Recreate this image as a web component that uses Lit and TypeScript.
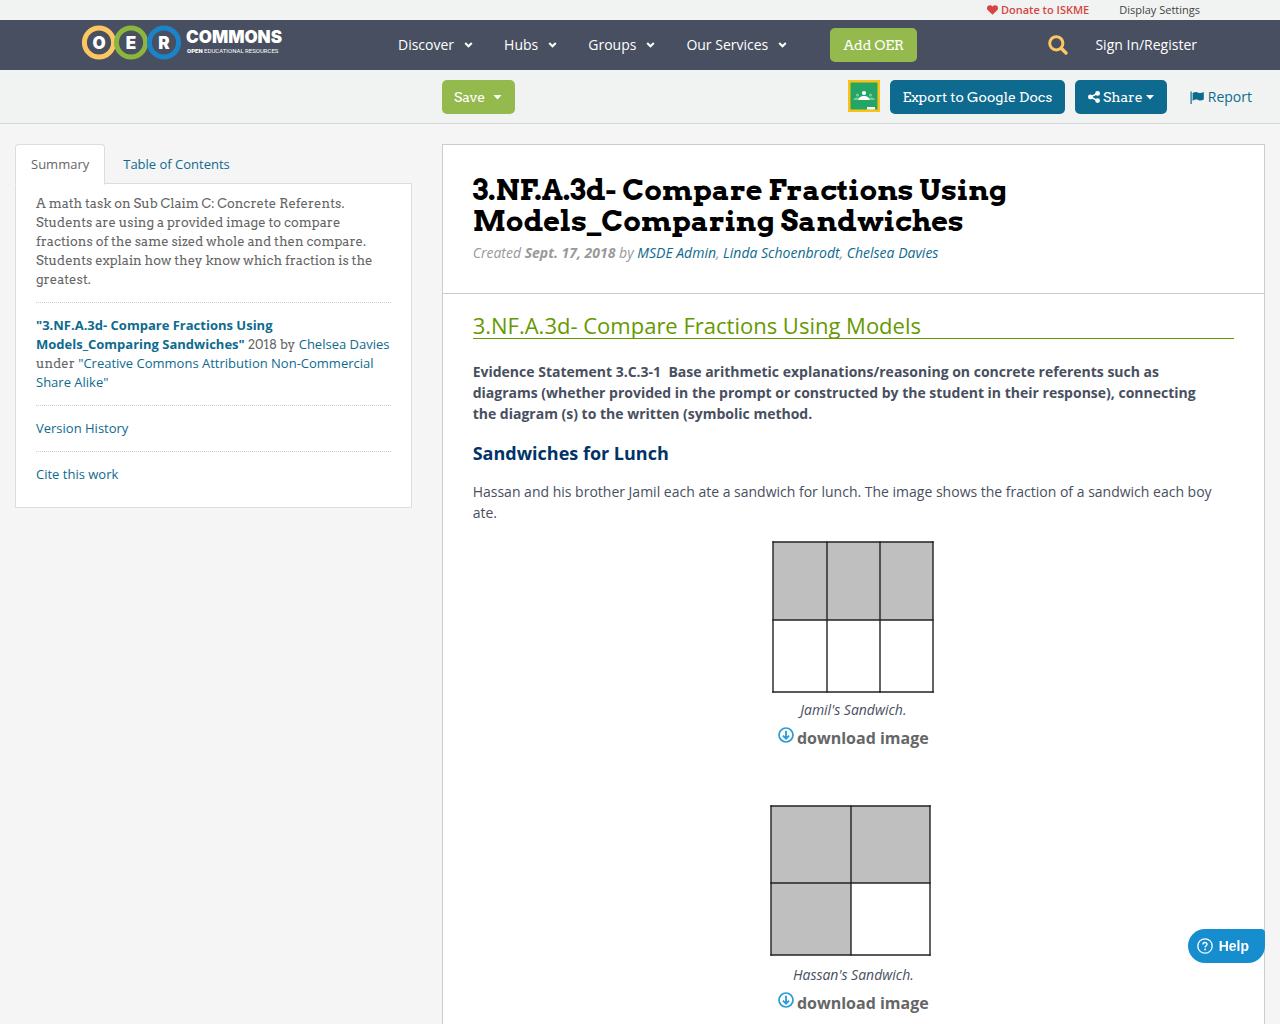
import { LitElement, html, css, svg } from "lit";
import { customElement, property } from "lit/decorators.js";

const NAV = ["Discover", "Hubs", "Groups", "Our Services"];

interface Sandwich {
  name: string;
  height: number;
  xs: number[];
  ys: number[];
  shaded: number;
}

const SANDWICHES: Sandwich[] = [
  { name: "Jamil's Sandwich.", height: 155, xs: [5, 59, 112, 165], ys: [2, 80, 152], shaded: 3 },
  { name: "Hassan's Sandwich.", height: 156, xs: [3, 83, 162], ys: [2, 79, 151], shaded: 3 },
];

@customElement("fraction-figure")
export class FractionFigure extends LitElement {
  @property({ attribute: false }) item: Sandwich = SANDWICHES[0];

  static styles = css`
    :host { display: block; }
    .figure { margin: 0; text-align: center; }
    .drawing { display: block; margin: 0 auto; }
    .caption { font-style: italic; line-height: 21px; margin-top: 4px; color: #484f60; }
    .download {
      display: inline-flex; align-items: flex-start; gap: 3px; margin-top: 6px;
      font-size: 16px; line-height: 24px; font-weight: 700; color: #666; text-decoration: none;
    }
  `;

  render() {
    const { xs, ys, shaded, height, name } = this.item;
    const cols = xs.length - 1;
    const cells = [];
    for (let i = 0; i < shaded; i++) {
      const c = i % cols;
      const r = Math.floor(i / cols);
      cells.push(svg`<rect x=${xs[c]} y=${ys[r]} width=${xs[c + 1] - xs[c]} height=${ys[r + 1] - ys[r]} fill="#bfbfbf"/>`);
    }
    const right = xs[cols];
    const bottom = ys[ys.length - 1];
    return html`
      <figure class="figure">
        <svg class="drawing" width="170" height=${height} viewBox="0 0 170 ${height}" role="img" aria-label=${name}>
          ${cells}
          <g stroke="#222" stroke-width="1.4" stroke-linecap="square">
            ${xs.map((x) => svg`<line x1=${x} x2=${x} y1=${ys[0]} y2=${bottom}/>`)}
            ${ys.map((y) => svg`<line x1=${xs[0]} x2=${right} y1=${y} y2=${y}/>`)}
          </g>
        </svg>
        <figcaption class="caption">${name}</figcaption>
        <a class="download" href="#">
          <svg width="16" height="18" viewBox="0 0 16 18" fill="none" stroke="#2a9bd4" aria-hidden="true">
            <circle cx="8" cy="9" r="7" stroke-width="1.7"/>
            <path d="M8 4.8V12.6M4.9 9.6L8 12.7L11.1 9.6" stroke-width="1.8"/>
          </svg>
          download image
        </a>
      </figure>
    `;
  }
}

@customElement("app-root")
export class AppRoot extends LitElement {
  static styles = css`
    :host {
      display: flex; flex-direction: column; min-height: 100vh; background: #f5f5f5;
      font-family: "Open Sans", sans-serif; font-size: 14px; line-height: 21px; color: #484f60;
    }
    * { box-sizing: border-box; }
    a { color: #0e6a8e; text-decoration: none; }
    button { font: inherit; border: 0; cursor: pointer; }
    .slab { font-family: Arvo, "DejaVu Serif Condensed", "DejaVu Serif", serif; }

    .top {
      display: flex; justify-content: flex-end; gap: 30px; height: 20px; padding: 0 80px;
      background: #f0f3f2; font-size: 11px; line-height: 20px;
    }
    .top .donate { display: flex; align-items: center; gap: 3px; color: #d64541; font-weight: 600; }
    .top .settings { color: #444; padding: 0; background: none; line-height: 20px; }

    .navbar {
      display: flex; align-items: center; height: 50px; padding: 0 83px 0 80px;
      background: #484f60; line-height: 20px;
    }
    .logo { display: block; height: 40px; margin-right: 110px; }
    .menu { display: flex; gap: 31px; }
    .menu-item { display: flex; align-items: center; gap: 10px; padding: 0; background: none; color: #fff; }
    .btn {
      display: flex; align-items: center; justify-content: center; height: 34px; padding: 0;
      border-radius: 5px; color: #fff; font-size: 14px; line-height: 20px;
      font-family: Arvo, "DejaVu Serif Condensed", "DejaVu Serif", serif;
    }
    .green { background: #94ba4d; }
    .blue { background: #0e6a8e; }
    .add { margin-left: 43px; width: 87px; }
    .account { display: flex; align-items: center; gap: 27px; margin-left: auto; }
    .search { display: flex; padding: 0; background: none; }
    .account .sign { color: #fff; }

    .toolbar { display: flex; height: 54px; background: #f0f3f2; border-bottom: 1px solid #d3d6d5; padding-top: 10px; }
    .side { flex: 0 0 33.333%; padding: 0 15px; }
    .main { flex: 1 1 0; min-width: 0; padding: 0 15px; }
    .tools { display: flex; align-items: flex-start; gap: 10px; }
    .save { gap: 8px; width: 73px; }
    .classroom { display: block; margin-left: auto; height: 32px; }
    .export { width: 175px; }
    .share { width: 92px; gap: 3px; }
    .report { display: flex; align-items: center; gap: 4px; height: 34px; padding: 0 13px; line-height: 20px; }

    .columns { display: flex; flex: 1; padding-top: 20px; }
    .tabs { display: flex; height: 39px; font-size: 13px; line-height: 19px; }
    .tab { padding: 10px 15px; border: 1px solid transparent; background: none; color: #0e6a8e; height: 40px; }
    .tab.on {
      position: relative; background: #fff; color: #666; border-color: #ddd; border-bottom-color: #fff;
      border-radius: 4px 4px 0 0; margin-right: 2px; height: 41px;
    }
    .panel {
      background: #fff; border: 1px solid #ddd; padding: 10px 20px 23px;
      font-size: 13px; line-height: 19px; color: #666;
    }
    .block { margin: 0; padding-bottom: 13px; border-bottom: 1px dotted #ccc; }
    .block + .block { padding-top: 13px; }
    .block:last-child { border-bottom: 0; padding-bottom: 0; }

    .card { height: 100%; background: #fff; border: 1px solid #ccc; border-bottom: 0; }
    .head { padding: 29px 30px 30px; border-bottom: 1px solid #ccc; }
    .title { margin: 0; font-size: 29px; line-height: 31px; font-weight: 700; color: #000; }
    .byline { margin: 6px 0 0; font-style: italic; color: #999; }
    .body { padding: 20px 30px; }
    .section {
      margin: 0 0 22px; padding-bottom: 2px; font-size: 22px; line-height: 22px; font-weight: 400; color: #690;
      border-bottom: 1px solid #690;
    }
    .evidence { margin: 0 0 16px; padding-right: 16px; font-weight: 700; }
    .sub { margin: 0 0 15px; font-size: 18px; line-height: 26px; font-weight: 700; color: #036; }
    .text { margin: 0 0 17px; padding-right: 16px; }
    .pair { display: flex; flex-direction: column; gap: 54px; }

    .help {
      position: fixed; right: 15px; bottom: 61px; display: flex; align-items: center; gap: 6px;
      height: 34px; padding: 0 16px 0 9px; border-radius: 17px 4px 17px 17px; background: #168dce;
      color: #fff; font: 700 14px/34px "Liberation Sans", Arial, sans-serif;
    }
    .logo-heavy { font-family: Inter, sans-serif; font-weight: 900; fill: #fff; }
    .logo-small { font-family: Roboto, sans-serif; fill: #fff; }
  `;

  private caret(size: number) {
    return html`<svg width=${size} height="5" viewBox="0 0 8 5" aria-hidden="true"><path d="M0 0H8L4 4.6Z" fill="#fff"/></svg>`;
  }

  private logo() {
    const rings: [string, number, string][] = [
      ["O", 19, "#fcc763"],
      ["E", 51, "#8ab53f"],
      ["R", 84, "#1c83c8"],
    ];
    return html`
      <a class="logo" href="#" aria-label="OER Commons">
        <svg width="208" height="40" viewBox="0 0 208 40">
          ${rings.map(([t, x, c]) => svg`
            <circle cx=${x} cy="17.500" r="14.600" fill="none" stroke=${c} stroke-width="5"/>
            <text class="logo-heavy" x=${x} y="24" font-size="17" text-anchor="middle">${t}</text>`)}
          <text class="logo-heavy" x="106" y="18" font-size="17">COMMONS</text>
          <text class="logo-small" x="107" y="28" font-size="6"><tspan font-weight="900">OPEN</tspan> EDUCATIONAL RESOURCES</text>
        </svg>
      </a>
    `;
  }

  render() {
    return html`
      <div class="top">
        <a class="donate" href="#">
          <svg width="11" height="10" viewBox="0 0 11 10" aria-hidden="true"><path fill="#d64541" d="M5.5 9.8L.9 5.3C-.4 4 -.2 2 .8 1C2 -.2 4.300 -.1 5.500 1.500C6.700 -.1 9 -.2 10.200 1C11.200 2 11.400 4 10.100 5.300Z"/></svg>
          Donate to ISKME
        </a>
        <button class="settings">Display Settings</button>
      </div>

      <header class="navbar">
        ${this.logo()}
        <nav class="menu">
          ${NAV.map((n) => html`
            <button class="menu-item">${n}
              <svg width="9" height="6" viewBox="0 0 9 6" aria-hidden="true"><path d="M1.200 1L4.500 4.300L7.800 1" fill="none" stroke="#fff" stroke-width="2"/></svg>
            </button>`)}
        </nav>
        <a class="btn green add" href="#">Add OER</a>
        <div class="account">
          <button class="search" aria-label="Search">
            <svg width="20" height="20" viewBox="0 0 20 20" fill="none" stroke="#fcc763" aria-hidden="true">
              <circle cx="8.300" cy="8.300" r="6.600" stroke-width="3"/>
              <path d="M13.200 13.200L18 18" stroke-width="3.400" stroke-linecap="round"/>
            </svg>
          </button>
          <a class="sign" href="#">Sign In/Register</a>
        </div>
      </header>

      <div class="toolbar">
        <div class="side"></div>
        <div class="main tools">
          <button class="btn green save">Save ${this.caret(9)}</button>
          <a class="classroom" href="#" aria-label="Share to Google Classroom">
            <svg width="32" height="32" viewBox="0 0 32 32" aria-hidden="true">
              <rect width="32" height="32" fill="#fbc116"/>
              <rect x="2.500" y="2.500" width="27" height="27" fill="#23a566"/>
              <g fill="#7cc9a1">
                <circle cx="9.500" cy="15" r="1.500"/><circle cx="22.500" cy="15" r="1.500"/>
                <path d="M5.500 20C5.500 16.800 13 16.800 13 20ZM19 20C19 16.800 26.800 16.800 26.800 20Z"/>
              </g>
              <g fill="#fff">
                <circle cx="16" cy="13" r="2.100"/>
                <path d="M10.500 20C10.500 14.800 21.500 14.800 21.500 20Z"/>
                <rect x="19" y="27" width="8" height="2.500"/>
              </g>
            </svg>
          </a>
          <button class="btn blue export">Export to Google Docs</button>
          <button class="btn blue share">
            <svg width="12" height="12" viewBox="0 0 12 12" fill="#fff" stroke="#fff" aria-hidden="true">
              <circle cx="2.400" cy="6" r="2.400" stroke="none"/><circle cx="9.600" cy="2.400" r="2.400" stroke="none"/><circle cx="9.600" cy="9.600" r="2.400" stroke="none"/>
              <path d="M9.600 2.400L2.400 6L9.600 9.600" fill="none" stroke-width="1.500"/>
            </svg>
            Share ${this.caret(8)}
          </button>
          <a class="report" href="#">
            <svg width="14" height="13" viewBox="0 0 14 13" fill="#0e6a8e" aria-hidden="true">
              <path d="M.5 .4H1.700V13H.5ZM2.600 2C5 .5 6.700 .8 8.500 1.700C10.200 2.400 11.800 1.900 13.800 .9V8.400C11.500 9.700 10 9.800 8.300 9C6.500 8.200 4.800 8.400 2.600 9.700Z"/>
            </svg>
            Report
          </a>
        </div>
      </div>

      <div class="columns">
        <aside class="side">
          <div class="tabs" role="tablist">
            <button class="tab on" role="tab" aria-selected="true">Summary</button>
            <button class="tab" role="tab" aria-selected="false">Table of Contents</button>
          </div>
          <div class="panel" role="tabpanel">
            <p class="block slab">A math task on Sub Claim C: Concrete Referents. Students are using a provided image to compare fractions of the same sized whole and then compare. Students explain how they know which fraction is the greatest.</p>
            <p class="block">
              <a href="#"><strong>"3.NF.A.3d- Compare Fractions Using Models_Comparing Sandwiches"</strong></a>
              <span class="slab">2018 by</span> <a href="#">Chelsea Davies</a>
              <span class="slab">under</span> <a href="#">"Creative Commons Attribution Non-Commercial Share Alike"</a>
            </p>
            <p class="block"><a href="#">Version History</a></p>
            <p class="block"><a href="#">Cite this work</a></p>
          </div>
        </aside>

        <main class="main">
          <article class="card">
            <header class="head">
              <h1 class="title slab">3.NF.A.3d- Compare Fractions Using<br>Models_Comparing Sandwiches</h1>
              <p class="byline">Created <strong>Sept. 17, 2018</strong> by <a href="#">MSDE Admin</a>, <a href="#">Linda Schoenbrodt</a>, <a href="#">Chelsea Davies</a></p>
            </header>
            <div class="body">
              <h2 class="section">3.NF.A.3d- Compare Fractions Using Models</h2>
              <p class="evidence">Evidence Statement 3.C.3-1 &nbsp;Base arithmetic explanations/reasoning on concrete referents such as diagrams (whether provided in the prompt or constructed by the student in their response), connecting the diagram (s) to the written (symbolic method.</p>
              <h3 class="sub">Sandwiches for Lunch</h3>
              <p class="text">Hassan and his brother Jamil each ate a sandwich for lunch. The image shows the fraction of a sandwich each boy ate.</p>
              <div class="pair">
                ${SANDWICHES.map((s) => html`<fraction-figure .item=${s}></fraction-figure>`)}
              </div>
            </div>
          </article>
        </main>
      </div>

      <button class="help">
        <svg width="16" height="16" viewBox="0 0 16 16" fill="none" stroke="#fff" aria-hidden="true">
          <circle cx="8" cy="8" r="7.200" stroke-width="1.300"/>
          <path d="M6 6.500C6 3.900 10 3.900 10 6.300C10 7.700 8.100 7.800 8.100 9.500" stroke-width="1.400"/>
          <circle cx="8.100" cy="11.500" r=".9" fill="#fff" stroke="none"/>
        </svg>
        <span>Help</span>
      </button>
    `;
  }
}
